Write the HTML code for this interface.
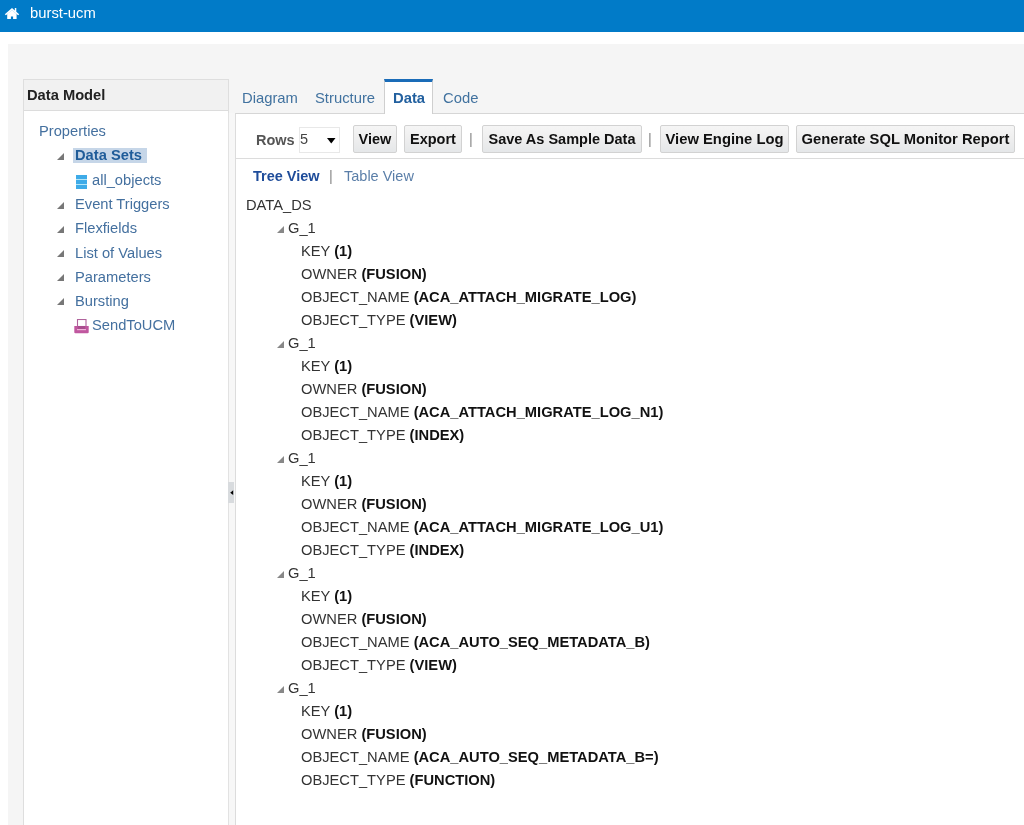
<!DOCTYPE html>
<html><head><meta charset="utf-8">
<style>
*{box-sizing:border-box}
html,body{margin:0;padding:0;width:1024px;height:825px;overflow:hidden;background:#fff;font-family:"Liberation Sans",sans-serif;font-size:14.5px}
.a{position:absolute;white-space:nowrap}
#hdr{left:0;top:0;width:1024px;height:32px;background:#017bc8}
#title{left:30px;top:4px;color:#fff;font-size:14.8px;line-height:18px}
#gray{left:8px;top:44px;width:1016px;height:781px;background:#f5f5f5}
#lp{left:23px;top:79px;width:206px;height:760px;background:#fff;border:1px solid #dedede}
#lph{left:0;top:0;width:204px;height:31px;background:#f1f1f1;border-bottom:1px solid #dcdcdc}
.lpt{color:#222;font-weight:bold;font-size:14.7px}
.tr{color:#44709f;font-size:14.7px;line-height:17px}
.tri{width:0;height:0;border-style:solid}
.tab{color:#41729f;font-size:14.8px;line-height:17px}
#split{left:228px;top:113px;width:8px;height:712px;background:#f7f7f7;border-left:1px solid #e2e2e2;border-right:1px solid #e2e2e2}
#content{left:235px;top:113px;width:789px;height:712px;background:#fff;border-top:1px solid #d6d6d6;border-left:1px solid #dcdcdc}
#dtab{left:384px;top:79px;width:49px;height:35px;background:#fff;border-left:1px solid #cfcfcf;border-right:1px solid #cfcfcf;border-top:3px solid #1a6cb8}
.btn{height:28px;top:125px;background:linear-gradient(#f5f5f5 0%,#efefef 45%,#e5e7e9 100%);border:1px solid #d2d2d2;border-radius:2px;color:#111;font-weight:bold;font-size:14.5px;line-height:26px;text-align:center}
.sep{color:#8a8a8a;font-size:14.5px;line-height:17px}
.dt{color:#333;font-size:14.7px;line-height:17px}
.dt b{color:#111}
.gtri{width:0;height:0;border-style:solid;border-width:0 0 7px 7px;border-color:transparent transparent #888 transparent}
.ltri{width:0;height:0;border-style:solid;border-width:0 0 7px 7px;border-color:transparent transparent #777 transparent}
</style></head><body><div id="wrap" style="position:absolute;left:0;top:0;width:1024px;height:825px;filter:blur(0.3px)">
<div id="hdr" class="a"></div>
<svg class="a" style="left:0;top:0" width="30" height="30" viewBox="0 0 30 30">
  <path d="M12 8.1 L4.8 14.2 L5.9 15.3 L12 10.2 L18.1 15.3 L19.2 14.2 L16.3 11.7 L16.3 8 L14.8 8 L14.8 10.5 Z" fill="#fff"/>
  <path d="M7.2 13.9 L12 9.9 L16.6 13.9 L16.6 19 L13.1 19 L13.1 16.4 L10.9 16.4 L10.9 19 L7.2 19 Z" fill="#fff"/>
</svg>
<div id="title" class="a">burst-ucm</div>
<div id="gray" class="a"></div>

<div id="lp" class="a">
  <div id="lph" class="a"></div>
</div>
<div class="a lpt" style="left:27px;top:87px;line-height:17px">Data Model</div>

<div class="a tr" style="left:39px;top:123px">Properties</div>
<div class="a" style="left:73px;top:148px;width:74px;height:15px;background:#c6d6e8"></div>
<div class="a tr" style="left:75px;top:147px;font-weight:bold;color:#1f5c99">Data Sets</div>
<div class="a tr" style="left:92px;top:172px">all_objects</div>
<div class="a tr" style="left:75px;top:196px">Event Triggers</div>
<div class="a tr" style="left:75px;top:220px">Flexfields</div>
<div class="a tr" style="left:75px;top:245px">List of Values</div>
<div class="a tr" style="left:75px;top:269px">Parameters</div>
<div class="a tr" style="left:75px;top:293px">Bursting</div>
<div class="a tr" style="left:92px;top:317px">SendToUCM</div>

<div id="split" class="a"></div>
<div id="content" class="a"></div>
<div id="dtab" class="a"></div>

<div class="a tab" style="left:242px;top:90px">Diagram</div>
<div class="a tab" style="left:315px;top:90px">Structure</div>
<div class="a tab" style="left:393px;top:90px;font-weight:bold;color:#22609f">Data</div>
<div class="a tab" style="left:443px;top:90px">Code</div>

<div class="a" style="left:256px;top:132px;color:#555;font-weight:bold;line-height:17px">Rows</div>
<div class="a" style="left:299px;top:127px;width:41px;height:26px;background:#fff;border:1px solid #e8e8e8"></div>
<div class="a" style="left:300px;top:131px;color:#444;line-height:17px">5</div>
<div class="a btn" style="left:353px;width:44px">View</div>
<div class="a btn" style="left:404px;width:58px">Export</div>
<div class="a sep" style="left:469px;top:131px">|</div>
<div class="a btn" style="left:482px;width:160px">Save As Sample Data</div>
<div class="a sep" style="left:648px;top:131px">|</div>
<div class="a btn" style="left:660px;width:129px;font-size:14.8px">View Engine Log</div>
<div class="a btn" style="left:796px;width:219px;font-size:14.75px">Generate SQL Monitor Report</div>
<div class="a" style="left:236px;top:158px;width:788px;height:1px;background:#dcdcdc"></div>

<div class="a" style="left:253px;top:168px;font-weight:bold;color:#1e4c9a;line-height:17px">Tree View</div>
<div class="a sep" style="left:329px;top:168px">|</div>
<div class="a" style="left:344px;top:168px;color:#5a7ea8;line-height:17px">Table View</div>

<div class="a dt" style="left:246px;top:197px">DATA_DS</div>
<div class="a ltri" style="left:57px;top:153px"></div>
<div class="a ltri" style="left:57px;top:202px"></div>
<div class="a ltri" style="left:57px;top:226px"></div>
<div class="a ltri" style="left:57px;top:250px"></div>
<div class="a ltri" style="left:57px;top:274px"></div>
<div class="a ltri" style="left:57px;top:298px"></div>
<svg class="a" style="left:76px;top:175px" width="11" height="14" viewBox="0 0 11 14">
<rect x="0" y="0" width="11" height="14" fill="#b4e6f8"/><rect x="0" y="0" width="11" height="4" fill="#3eabe8"/><rect x="0" y="5" width="11" height="4" fill="#3eabe8"/><rect x="0" y="10" width="11" height="4" fill="#3eabe8"/></svg>
<svg class="a" style="left:74px;top:319px" width="15" height="15" viewBox="0 0 15 15">
<rect x="3.5" y="0.5" width="8.5" height="7" fill="none" stroke="#b0639c" stroke-width="1.1"/>
<path d="M0.3 7 H14.7 V13.2 Q14.7 14.3 13.6 14.3 H1.4 Q0.3 14.3 0.3 13.2 Z" fill="#c0579f"/>
<rect x="3.8" y="7" width="7.4" height="3" fill="#a94d8e"/>
<rect x="3" y="10" width="9" height="1.2" fill="#eeb2d8"/>
</svg>
<svg class="a" style="left:327px;top:138px" width="9" height="6" viewBox="0 0 9 6"><path d="M0 0 H8.5 L4.25 5.5 Z" fill="#000"/></svg>
<div class="a" style="left:228px;top:482px;width:6px;height:21px;background:#d8dbde"></div>
<svg class="a" style="left:230px;top:490px" width="4" height="6" viewBox="0 0 4 6"><path d="M3.2 0.3 V5 L0.2 2.65 Z" fill="#000"/></svg>

<div class="a gtri" style="left:277px;top:226px"></div>
<div class="a dt" style="left:288px;top:220px">G_1</div>
<div class="a dt" style="left:301px;top:243px">KEY <b>(1)</b></div>
<div class="a dt" style="left:301px;top:266px">OWNER <b>(FUSION)</b></div>
<div class="a dt" style="left:301px;top:289px">OBJECT_NAME <b>(ACA_ATTACH_MIGRATE_LOG)</b></div>
<div class="a dt" style="left:301px;top:312px">OBJECT_TYPE <b>(VIEW)</b></div>
<div class="a gtri" style="left:277px;top:341px"></div>
<div class="a dt" style="left:288px;top:335px">G_1</div>
<div class="a dt" style="left:301px;top:358px">KEY <b>(1)</b></div>
<div class="a dt" style="left:301px;top:381px">OWNER <b>(FUSION)</b></div>
<div class="a dt" style="left:301px;top:404px">OBJECT_NAME <b>(ACA_ATTACH_MIGRATE_LOG_N1)</b></div>
<div class="a dt" style="left:301px;top:427px">OBJECT_TYPE <b>(INDEX)</b></div>
<div class="a gtri" style="left:277px;top:456px"></div>
<div class="a dt" style="left:288px;top:450px">G_1</div>
<div class="a dt" style="left:301px;top:473px">KEY <b>(1)</b></div>
<div class="a dt" style="left:301px;top:496px">OWNER <b>(FUSION)</b></div>
<div class="a dt" style="left:301px;top:519px">OBJECT_NAME <b>(ACA_ATTACH_MIGRATE_LOG_U1)</b></div>
<div class="a dt" style="left:301px;top:542px">OBJECT_TYPE <b>(INDEX)</b></div>
<div class="a gtri" style="left:277px;top:571px"></div>
<div class="a dt" style="left:288px;top:565px">G_1</div>
<div class="a dt" style="left:301px;top:588px">KEY <b>(1)</b></div>
<div class="a dt" style="left:301px;top:611px">OWNER <b>(FUSION)</b></div>
<div class="a dt" style="left:301px;top:634px">OBJECT_NAME <b>(ACA_AUTO_SEQ_METADATA_B)</b></div>
<div class="a dt" style="left:301px;top:657px">OBJECT_TYPE <b>(VIEW)</b></div>
<div class="a gtri" style="left:277px;top:686px"></div>
<div class="a dt" style="left:288px;top:680px">G_1</div>
<div class="a dt" style="left:301px;top:703px">KEY <b>(1)</b></div>
<div class="a dt" style="left:301px;top:726px">OWNER <b>(FUSION)</b></div>
<div class="a dt" style="left:301px;top:749px">OBJECT_NAME <b>(ACA_AUTO_SEQ_METADATA_B=)</b></div>
<div class="a dt" style="left:301px;top:772px">OBJECT_TYPE <b>(FUNCTION)</b></div>
</div></body></html>
